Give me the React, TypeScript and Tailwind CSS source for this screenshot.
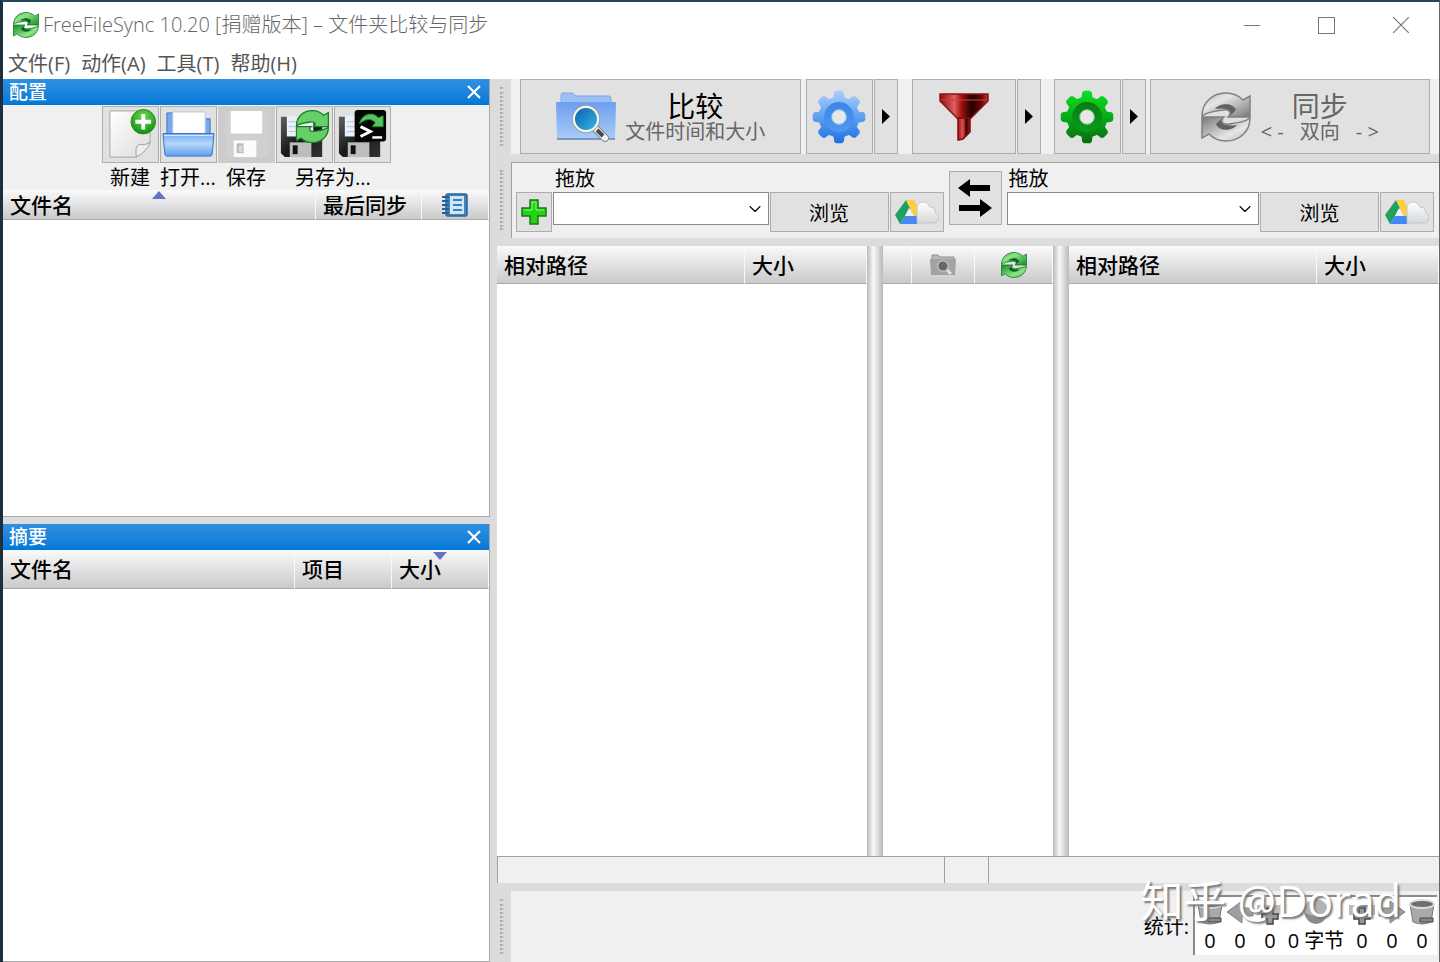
import type { ReactNode } from 'react'
import { ChevronDown } from 'lucide-react'

const btn = 'flex items-center justify-center border border-[#adadad] bg-[#e1e1e1]'
const headRow = 'bg-linear-to-b from-[#fafafa] to-[#c9c9c9]'
const headCell =
  'border-r border-b border-r-[#f8f8f8] border-b-[#a8a8a8] px-[7px] text-left text-[21px] leading-6 font-medium'

const MENUS = ['文件(F)', '动作(A)', '工具(T)', '帮助(H)']

const UPPER =
  'M1 24 C1 10 12 1 25 1 C32 1 38 4 42 8 L49 4 L49 25 L27 25 C31 21 29 17 22 18 C13 19 6 20 1 24 Z'

function SyncIcon({ className, gray }: { className: string; gray?: boolean }) {
  const id = gray ? 'sync-gray' : 'sync-green'
  return (
    <svg viewBox="0 0 50 50" className={className} aria-hidden="true">
      <defs>
        <linearGradient id={id} x1="0" y1="0" x2="1" y2="1">
          <stop offset="0" stopColor={gray ? '#b4b4b4' : '#3fae45'} />
          <stop offset="0.35" stopColor={gray ? '#e6e6e6' : '#8fe488'} />
          <stop offset="1" stopColor={gray ? '#767676' : '#148f24'} />
        </linearGradient>
      </defs>
      {[0, 180].map((angle) => (
        <g key={angle} transform={`rotate(${angle} 25 25)`}>
          <path d={UPPER} fill={`url(#${id})`} stroke={gray ? '#808080' : '#15702a'} strokeWidth="1.5" />
          <path d="M14 17 C18 11 32 10 35 18 L29 24 C32 19 27 15 14 17 Z" fill={gray ? '#626262' : '#0b6420'} />
        </g>
      ))}
    </svg>
  )
}

const GEAR = Array.from({ length: 8 }, (_, i) =>
  [[-14, 20], [-11, 22], [-9, 25], [-6, 26], [6, 26], [9, 25], [11, 22], [14, 20]].map(([deg, r]) => {
    const a = ((i * 45 + deg) * Math.PI) / 180
    return `${(30 + r * Math.sin(a)).toFixed(1)},${(30 - r * Math.cos(a)).toFixed(1)}`
  }).join(' ')
).join(' ')

function GearIcon({ green }: { green?: boolean }) {
  const id = green ? 'gear-green' : 'gear-blue'
  return (
    <svg viewBox="0 0 60 60" className="size-[58px] shrink-0" aria-hidden="true">
      <defs>
        <linearGradient id={id} x1="0" y1="0" x2="0" y2="1">
          <stop offset="0" stopColor={green ? '#0bdc20' : '#a8cdfa'} />
          <stop offset="0.5" stopColor={green ? '#08ac18' : '#5d9ff2'} />
          <stop offset="1" stopColor={green ? '#04700c' : '#2273e0'} />
        </linearGradient>
        <linearGradient id={`${id}-ring`} x1="0" y1="0" x2="0" y2="1">
          <stop offset="0" stopColor={green ? '#087a14' : '#3b86e6'} />
          <stop offset="1" stopColor={green ? '#0b9c1c' : '#4f98f2'} />
        </linearGradient>
      </defs>
      <polygon
        points={GEAR}
        fill={`url(#${id})`}
        stroke={`url(#${id})`}
        strokeWidth="2.5"
        strokeLinejoin="round"
      />
      <circle cx="30" cy="30" r="15.5" fill={`url(#${id}-ring)`} />
      <circle cx="30" cy="30" r="7.5" fill="#e8e8e8" stroke={green ? '#8bc790' : '#9cc4f5'} />
    </svg>
  )
}

function FunnelIcon() {
  return (
    <svg viewBox="0 0 50 50" className="h-[50px] w-[50px]" aria-hidden="true">
      <defs>
        <linearGradient id="funnel" x1="0" y1="0" x2="1" y2="0">
          <stop offset="0" stopColor="#8c0c0c" />
          <stop offset="0.3" stopColor="#e06060" />
          <stop offset="0.45" stopColor="#a01010" />
          <stop offset="0.65" stopColor="#260000" />
          <stop offset="0.85" stopColor="#5c0404" />
          <stop offset="1" stopColor="#d03030" />
        </linearGradient>
        <linearGradient id="funnel-stem" x1="0" y1="0" x2="1" y2="0">
          <stop offset="0" stopColor="#b01818" />
          <stop offset="0.4" stopColor="#e05050" />
          <stop offset="0.7" stopColor="#300000" />
          <stop offset="1" stopColor="#c01818" />
        </linearGradient>
      </defs>
      <path d="M1 2 H49 V9 L31 27 H19 L1 9 Z" fill="url(#funnel)" stroke="#8c1414" strokeWidth="1.5" />
      <path d="M2 8 H48" stroke="#c84040" strokeWidth="1" />
      <path d="M19 26 H31 V40 L24 47 L19 48 Z" fill="url(#funnel-stem)" stroke="#7c0c0c" strokeWidth="1.5" />
    </svg>
  )
}

function FolderSearchIcon() {
  return (
    <svg viewBox="0 0 62 52" className="h-[52px] w-[62px]" aria-hidden="true">
      <defs>
        <linearGradient id="folder" x1="0" y1="0" x2="0" y2="1">
          <stop offset="0" stopColor="#6c9fee" />
          <stop offset="1" stopColor="#a9cbf7" />
        </linearGradient>
        <linearGradient id="lens" x1="0" y1="0" x2="1" y2="1">
          <stop offset="0" stopColor="#0c62a8" />
          <stop offset="1" stopColor="#35b4e8" />
        </linearGradient>
      </defs>
      <path d="M6 12 V4 Q6 2 8 2 H17 L21 5 H54 Q56 5 56 8 V14 H6 Z" fill="#9cc0f4" stroke="#7aa6e6" />
      <path d="M1 12 Q1 11 2 11 H60 Q61 11 61 12 L60 48 H2 Z" fill="url(#folder)" />
      <path d="M2 48 H60" stroke="#5b86b4" strokeWidth="1.5" />
      <path d="M41 38 L50 47" stroke="#888" strokeWidth="8" strokeLinecap="round" />
      <path d="M41 38 L50 47" stroke="#f4f4f4" strokeWidth="6" strokeLinecap="round" />
      <path d="M42 39 L48 45" stroke="#4a4a4a" strokeWidth="4" />
      <circle cx="31" cy="28" r="14" fill="#999" />
      <circle cx="31" cy="28" r="13.2" fill="#f6f6f6" />
      <circle cx="31" cy="28" r="11" fill="url(#lens)" />
    </svg>
  )
}

function Floppy() {
  return (
    <>
      <defs>
        <linearGradient id="disk" x1="0" y1="0" x2="1" y2="1">
          <stop offset="0" stopColor="#606060" />
          <stop offset="0.5" stopColor="#181818" />
          <stop offset="1" stopColor="#333" />
        </linearGradient>
      </defs>
      <path d="M4 10 H46 V51 H8 L4 47 Z" fill="url(#disk)" />
      <path d="M10 9 H37 V30 H10 Z" fill="#e8f1fa" />
      <path d="M12 15 H35 M12 20 H35 M12 25 H35" stroke="#b5c5d8" />
      <path d="M13 36 H35 V51 H13 Z" fill="#bdbdbd" />
      <path d="M16 39 H21 V48 H16 Z" fill="#111" />
    </>
  )
}

function NewIcon() {
  return (
    <svg viewBox="0 0 56 56" className="size-[55px]" aria-hidden="true">
      <defs>
        <linearGradient id="page" x1="0" y1="0" x2="1" y2="1">
          <stop offset="0" stopColor="#ffffff" />
          <stop offset="1" stopColor="#dcdcdc" />
        </linearGradient>
        <radialGradient id="badge" cx="0.5" cy="0.3" r="0.7">
          <stop offset="0" stopColor="#69d94c" />
          <stop offset="1" stopColor="#129012" />
        </radialGradient>
      </defs>
      <path d="M7 4 H48 V36 L34 51 H7 Z" fill="url(#page)" stroke="#a6a6a6" />
      <path d="M34 51 Q32 40 37 38 Q42 40 48 36 Q45 45 34 51 Z" fill="#eee" stroke="#a0a0a0" />
      <circle cx="41" cy="15" r="12.5" fill="url(#badge)" stroke="#2e8a22" />
      <path d="M41 7 V23 M33 15 H49" stroke="#fff" strokeWidth="4" />
    </svg>
  )
}

function OpenIcon() {
  return (
    <svg viewBox="0 0 56 56" className="size-[55px]" aria-hidden="true">
      <defs>
        <linearGradient id="tray" x1="0" y1="0" x2="0" y2="1">
          <stop offset="0" stopColor="#75abf0" />
          <stop offset="0.45" stopColor="#b4d8fc" />
          <stop offset="1" stopColor="#5f9ded" />
        </linearGradient>
      </defs>
      <path d="M6 28 V6 H14 V12 H50 V28 Z" fill="#79a9ea" stroke="#3b78c8" />
      <path d="M12 5 H45 V27 H12 Z" fill="#fff" stroke="#b8cce4" />
      <path d="M2 27 H54 L52 48 Q52 50 50 50 H6 Q4 50 4 48 Z" fill="url(#tray)" stroke="#3974c4" />
      <path d="M3 29 H53" stroke="#d6e9ff" />
    </svg>
  )
}

function SaveIcon() {
  return (
    <svg viewBox="0 0 56 56" className="size-[55px]" aria-hidden="true">
      <path d="M6 5 H50 V51 H10 L6 47 Z" fill="#d0d0d0" />
      <path d="M12 4 H44 V27 H12 Z" fill="#fff" />
      <path d="M15 34 H38 V51 H15 Z" fill="#fbfbfb" />
      <path d="M18 37 H25 V47 H18 Z" fill="#b8b8b8" />
      <path d="M20 39 H24 V46 H20 Z" fill="#d8d8d8" />
    </svg>
  )
}

function SaveSyncIcon() {
  return (
    <svg viewBox="0 0 56 56" className="size-[55px]" aria-hidden="true">
      <Floppy />
      <svg x="19" y="3" width="34" height="34" viewBox="0 0 50 50">
        {[0, 180].map((angle) => (
          <path key={angle} d={UPPER} transform={`rotate(${angle} 25 25)`} fill="#68cf66" stroke="#168028" strokeWidth="2" />
        ))}
      </svg>
    </svg>
  )
}

function SaveBatchIcon() {
  return (
    <svg viewBox="0 0 56 56" className="size-[55px]" aria-hidden="true">
      <Floppy />
      <rect x="20" y="3" width="32" height="32" rx="3" fill="#050505" />
      <path d="M25 17 C27 7 39 4 44 11 L49 9 V20 H38 L41 16 C37 11 31 12 25 17 Z" fill="#55c45c" stroke="#23883a" />
      <path d="M26 20 L36 25 L26 30" fill="none" stroke="#fff" strokeWidth="3" />
      <path d="M38 31 H48" stroke="#fff" strokeWidth="2.5" />
    </svg>
  )
}

function CloudIcon() {
  return (
    <svg viewBox="0 0 46 28" className="h-7 w-[46px]" aria-hidden="true">
      <defs>
        <linearGradient id="cloud" x1="0" y1="0" x2="0" y2="1">
          <stop offset="0" stopColor="#ffffff" />
          <stop offset="1" stopColor="#d5dadd" />
        </linearGradient>
      </defs>
      <path d="M12 2 L16 10 L6 26 L1 17 Z" fill="#1fa15d" />
      <path d="M12 2 H20 L23 8 V19 L20 18 Z" fill="#ffcd42" />
      <path d="M11 18 H23 V26 H6 Z" fill="#4688f4" />
      <path d="M15 10 L19 18 H11 Z" fill="#f2f2f2" />
      <path
        d="M23 25 V8 C25 3 33 2 36 9 C41 9 42 13 41 14 C46 16 46 25 39 25 Z"
        fill="url(#cloud)"
        stroke="#b9bec2"
        strokeWidth="0.8"
      />
    </svg>
  )
}

function NotebookIcon() {
  return (
    <svg viewBox="0 0 28 26" className="h-[26px] w-7" aria-hidden="true">
      <rect x="5" y="2" width="21" height="22" rx="2" fill="#4583bb" stroke="#2a659d" strokeWidth="1.5" />
      <rect x="9" y="4" width="14" height="18" fill="#cfe6f8" />
      <path d="M12 8 H21 M12 13 H21 M12 18 H21" stroke="#3d7fb8" strokeWidth="2" />
      <path d="M1 5 H8 M1 9 H8 M1 13 H8 M1 17 H8 M1 21 H8" stroke="#2a5f93" strokeWidth="2" />
    </svg>
  )
}

function GrayFolderIcon() {
  return (
    <svg viewBox="0 0 28 24" className="h-6 w-7" aria-hidden="true">
      <path d="M3 5 V2 H9 L11 4 H25 V7 H3 Z" fill="#b8b8b8" stroke="#8e8e8e" />
      <path d="M1 6 H27 L26 22 H2 Z" fill="#a3a3a3" />
      <path d="M17 16 L22 21" stroke="#e0e0e0" strokeWidth="3" />
      <circle cx="14" cy="13" r="6" fill="#c0c0c0" />
      <circle cx="14" cy="13" r="4.5" fill="#666" />
    </svg>
  )
}

function SwapIcon() {
  return (
    <svg viewBox="0 0 34 38" className="h-[38px] w-[34px]" aria-hidden="true">
      <path d="M0 9 L12 0 V6 H32 V12 H12 V18 Z" />
      <path d="M34 29 L22 20 V26 H1 V32 H22 V38 Z" />
    </svg>
  )
}

function PlusIcon() {
  return (
    <svg viewBox="0 0 26 26" className="size-[26px]" aria-hidden="true">
      <path d="M9 1 H17 V9 H25 V17 H17 V25 H9 V17 H1 V9 H9 Z" fill="#23d413" stroke="#1d7a14" strokeWidth="1.5" />
      <path d="M11 3 H15 V11 H23 M3 11 H11 V3" fill="none" stroke="#8cf57c" strokeWidth="1" />
    </svg>
  )
}

function CloseIcon() {
  return (
    <svg viewBox="0 0 14 14" className="size-[14px]" aria-hidden="true">
      <path d="M1 1 L13 13 M13 1 L1 13" stroke="currentColor" strokeWidth="2.2" />
    </svg>
  )
}

function TriangleRight() {
  return (
    <svg viewBox="0 0 8 15" className="h-[15px] w-2" aria-hidden="true">
      <path d="M0 0 L8 7.5 L0 15 Z" />
    </svg>
  )
}

function StatIcon({ kind }: { kind: string }) {
  return (
    <svg viewBox="0 0 28 28" className="size-7" aria-hidden="true">
      {kind === 'bin' && (
        <>
          <path d="M2 6 L5 24 Q14 28 23 24 L26 6 Z" fill="#a9a9a9" stroke="#777" />
          <ellipse cx="14" cy="6" rx="12" ry="4" fill="#6e6e6e" stroke="#ddd" strokeWidth="2" />
          <path d="M12 20 H25 V24 H12 Z" fill="#888" stroke="#444" />
        </>
      )}
      {(kind === 'left' || kind === 'right') && (
        <path
          d="M1 14 L16 3 V10 H27 V18 H16 V25 Z"
          transform={kind === 'right' ? 'rotate(180 14 14)' : undefined}
          fill="#9f9f9f"
          stroke="#828282"
        />
      )}
      {kind === 'plus' && (
        <>
          <path d="M1 7 H27 V17 H1 Z" fill="#bbb" />
          <path d="M11 10 H17 V16 H22 V21 H17 V26 H11 V21 H6 V16 H11 Z" fill="#999" stroke="#444" strokeWidth="1.5" />
        </>
      )}
      {kind === 'data' && (
        <>
          <circle cx="14" cy="13" r="12" fill="#b4b4b4" />
          <path d="M2 14 Q14 22 26 14 Q23 26 14 26 Q5 26 2 14 Z" fill="#8b8b8b" />
        </>
      )}
    </svg>
  )
}

const STATS = [
  { label: '删除左侧', kind: 'bin', value: '0' },
  { label: '更新左侧', kind: 'left', value: '0' },
  { label: '新建左侧', kind: 'plus', value: '0' },
  { label: '数据', kind: 'data', value: '0 字节' },
  { label: '新建右侧', kind: 'plus', value: '0' },
  { label: '更新右侧', kind: 'right', value: '0' },
  { label: '删除右侧', kind: 'bin', value: '0' },
]

function Grip() {
  return (
    <div className="flex w-[14px] shrink-0 justify-center py-2 pr-1">
      <div className="w-1 border-x-2 border-dotted border-l-[#aaa] border-r-[#c8c8c8]" />
    </div>
  )
}

function PanelTitle({ children }: { children: ReactNode }) {
  return (
    <div className="flex h-[26px] shrink-0 items-center justify-between bg-linear-to-b from-[#2f90e0] to-[#0078d7] pr-2 pl-[6px] text-white">
      <h2 className="text-[19px] leading-6 font-medium">{children}</h2>
      <button type="button" aria-label="关闭">
        <CloseIcon />
      </button>
    </div>
  )
}

function FolderPicker({ id, withAdd }: { id: string; withAdd?: boolean }) {
  return (
    <div className="min-w-0 flex-1">
      <label htmlFor={id} className={withAdd ? 'block h-[29px] pl-[39px] leading-8' : 'block h-[29px] pl-[2px] leading-8'}>
        拖放
      </label>
      <div className="flex items-start gap-px">
        {withAdd && (
          <button type="button" aria-label="添加" className={`${btn} h-10 w-9 shrink-0`}>
            <PlusIcon />
          </button>
        )}
        <div className="relative min-w-0 flex-1">
          <select id={id} className="block h-[33px] w-full appearance-none border border-[#8a8a8a] bg-white px-2">
            <option value=""></option>
          </select>
          <ChevronDown className="pointer-events-none absolute top-[7px] right-1 size-5" strokeWidth={1.3} />
        </div>
        <button type="button" className={`${btn} h-10 w-[119px] shrink-0 pt-[3px]`}>
          浏览
        </button>
        <button type="button" aria-label="云存储" className={`${btn} h-10 w-[54px] shrink-0`}>
          <CloudIcon />
        </button>
      </div>
    </div>
  )
}

function PathTable() {
  return (
    <div className="min-w-0 flex-1 bg-white">
      <table className="w-full table-fixed border-separate border-spacing-0">
        <thead>
          <tr className={headRow}>
            <th className={`${headCell} h-[38px] w-[248px]`}>相对路径</th>
            <th className={headCell}>大小</th>
          </tr>
        </thead>
      </table>
    </div>
  )
}

function Splitter() {
  return <div className="w-4 shrink-0 bg-linear-to-r from-[#bababa] via-[#f8f8f8] via-40% to-[#bababa]" />
}

export default function App() {
  return (
    <div className="flex min-h-screen flex-col border-t-2 border-r border-l-[3px] border-t-[#24465a] border-r-[#666] border-l-[#1d2f3d] bg-[#dcdcdc] font-['Open_Sans','Noto_Sans_CJK_SC',sans-serif] text-[20px] font-normal text-black">
      <header className="h-[77px] shrink-0 bg-white">
        <div className="flex h-[46px] items-center justify-between">
          <div className="flex items-center gap-1 pl-[10px]">
            <SyncIcon className="size-[26px]" />
            <h1 className="leading-7 font-light text-[#666]">FreeFileSync 10.20 [捐赠版本] – 文件夹比较与同步</h1>
          </div>
          <div className="flex items-center gap-[58px] pr-[30px] text-[#777]">
            <button type="button" aria-label="最小化" className="h-4 w-4">
              <svg viewBox="0 0 16 16"><path d="M0 8.5 H16" stroke="currentColor" /></svg>
            </button>
            <button type="button" aria-label="最大化" className="size-[17px] border border-[#777]" />
            <button type="button" aria-label="关闭窗口" className="size-4">
              <svg viewBox="0 0 16 16"><path d="M0 0 L16 16 M16 0 L0 16" stroke="currentColor" strokeWidth="1.2" /></svg>
            </button>
          </div>
        </div>
        <nav className="flex gap-[11px] pl-[5px] text-[#555]">
          {MENUS.map((menu) => (
            <button key={menu} type="button" className="leading-8">
              {menu}
            </button>
          ))}
        </nav>
      </header>

      <div className="flex flex-1 gap-[7px]">
        <aside className="flex w-[487px] shrink-0 flex-col gap-[7px]">
          <section className="flex flex-1 flex-col border-r border-b border-[#aaa] bg-white">
            <PanelTitle>配置</PanelTitle>
            <div className="flex justify-center bg-[#f0f0f0] pt-px">
              <div className="grid grid-cols-[repeat(5,57px)] gap-x-px text-center">
                <button type="button" aria-labelledby="cfg-new" className={`${btn} h-[57px]`}><NewIcon /></button>
                <button type="button" aria-labelledby="cfg-open" className={`${btn} h-[57px]`}><OpenIcon /></button>
                <button type="button" aria-labelledby="cfg-save" disabled className="flex h-[57px] items-center justify-center bg-[#cccccc]"><SaveIcon /></button>
                <button type="button" aria-label="另存为同步配置" className={`${btn} h-[57px]`}><SaveSyncIcon /></button>
                <button type="button" aria-label="另存为批处理作业" className={`${btn} h-[57px]`}><SaveBatchIcon /></button>
                <span id="cfg-new" className="h-[27px] leading-[30px]">新建</span>
                <span id="cfg-open" className="h-[27px] leading-[30px]">打开...</span>
                <span id="cfg-save" className="h-[27px] leading-[30px]">保存</span>
                <span className="col-span-2 h-[27px] leading-[30px]">另存为...</span>
              </div>
            </div>
            <table className="w-full table-fixed border-separate border-spacing-0">
              <thead>
                <tr className={headRow}>
                  <th className={`${headCell} relative h-[30px]`}>
                    文件名
                    <svg viewBox="0 0 14 8" className="absolute top-px left-[149px] h-2 w-[14px]" aria-hidden="true">
                      <path d="M0 8 L7 0 L14 8 Z" fill="#6670c4" />
                    </svg>
                  </th>
                  <th className={`${headCell} w-[106px]`}>最后同步</th>
                  <th className={`${headCell} w-[67px]`} aria-label="日志">
                    <span className="flex justify-center"><NotebookIcon /></span>
                  </th>
                </tr>
              </thead>
            </table>
          </section>

          <section className="flex flex-1 flex-col border-r border-b border-[#aaa] bg-white">
            <PanelTitle>摘要</PanelTitle>
            <table className="w-full table-fixed border-separate border-spacing-0">
              <thead>
                <tr className={headRow}>
                  <th className={`${headCell} h-[39px]`}>文件名</th>
                  <th className={`${headCell} w-[97px]`}>项目</th>
                  <th className={`${headCell} relative w-[97px]`}>
                    大小
                    <svg viewBox="0 0 14 8" className="absolute top-[2px] left-[41px] h-2 w-[14px]" aria-hidden="true">
                      <path d="M0 0 L7 8 L14 0 Z" fill="#6670c4" />
                    </svg>
                  </th>
                </tr>
              </thead>
            </table>
          </section>
        </aside>

        <main className="flex min-w-0 flex-1 flex-col gap-2">
          <div className="flex">
            <Grip />
            <div className="flex flex-1 bg-[#f0f0f0] pr-[9px] pl-[9px]">
              <button type="button" className={`${btn} h-[75px] flex-1 gap-2`}>
                <FolderSearchIcon />
                <span>
                  <span className="mb-[2px] block text-[28px] leading-7">比较</span>
                  <span className="block leading-5 text-[#666]">文件时间和大小</span>
                </span>
              </button>
              <button type="button" aria-label="比较设置" className={`${btn} ml-[5px] w-[67px]`}><GearIcon /></button>
              <button type="button" aria-label="比较选项" className={`${btn} ml-px w-6`}><TriangleRight /></button>
              <button type="button" aria-label="筛选器" className={`${btn} ml-[14px] w-[104px]`}><FunnelIcon /></button>
              <button type="button" aria-label="筛选选项" className={`${btn} ml-px w-6`}><TriangleRight /></button>
              <button type="button" aria-label="同步设置" className={`${btn} ml-[13px] w-[67px]`}><GearIcon green /></button>
              <button type="button" aria-label="同步选项" className={`${btn} ml-px w-6`}><TriangleRight /></button>
              <button type="button" className={`${btn} ml-1 h-[75px] flex-1 gap-[10px] text-[#666]`}>
                <SyncIcon gray className="size-[50px]" />
                <span>
                  <span className="mb-[2px] block text-[28px] leading-7">同步</span>
                  <span className="flex gap-4 leading-5">
                    <span>&lt; -</span>
                    <span>双向</span>
                    <span>- &gt;</span>
                  </span>
                </span>
              </button>
            </div>
          </div>

          <div className="flex">
            <Grip />
            <div className="flex h-[76px] flex-1 gap-[5px] border-t border-l border-[#a0a0a0] bg-[#f0f0f0] pr-[5px] pl-1">
              <FolderPicker id="left-folder" withAdd />
              <button type="button" aria-label="交换两侧" className={`${btn} mt-2 h-[54px] w-[53px] shrink-0`}>
                <SwapIcon />
              </button>
              <FolderPicker id="right-folder" />
            </div>
          </div>

          <div className="flex flex-1 flex-col">
            <div className="flex flex-1">
              <PathTable />
              <Splitter />
              <div className="w-[170px] shrink-0 bg-white">
                <table className="w-full table-fixed border-separate border-spacing-0">
                  <thead>
                    <tr className={headRow}>
                      <th className={`${headCell} h-[38px] w-[29px]`} aria-label="选择" />
                      <th className={`${headCell} w-[63px]`} aria-label="类别">
                        <span className="flex justify-center"><GrayFolderIcon /></span>
                      </th>
                      <th className={headCell} aria-label="操作">
                        <span className="flex justify-center"><SyncIcon className="size-[26px]" /></span>
                      </th>
                    </tr>
                  </thead>
                </table>
              </div>
              <Splitter />
              <PathTable />
            </div>
            <div className="flex h-[27px] border-t border-l border-[#a0a0a0] bg-[#f0f0f0] pr-1">
              <div className="flex-1" />
              <div className="w-[45px] border-x border-[#a0a0a0]" />
              <div className="flex-1" />
            </div>
          </div>

          <footer className="relative flex h-[71px]">
            <Grip />
            <div className="flex flex-1 items-start justify-end gap-1 bg-[#f0f0f0] pt-1 pr-[2px]">
              <span className="pt-[18px] leading-7">统计:</span>
              <dl className="flex border-t-2 border-l-2 border-[#8a8a8a] bg-white">
                {STATS.map((stat) => (
                  <div key={stat.label} className={stat.kind === 'data' ? 'w-[62px] text-center' : 'w-[30px] text-center'}>
                    <dt aria-label={stat.label} className="flex h-[30px] items-center justify-center">
                      <StatIcon kind={stat.kind} />
                    </dt>
                    <dd className="leading-7 whitespace-nowrap">{stat.value}</dd>
                  </div>
                ))}
              </dl>
            </div>
            <span className="pointer-events-none absolute -top-[14px] right-[38px] text-[43px] leading-[48px] font-normal whitespace-nowrap text-white [text-shadow:2px_2px_2px_#777]">
              知乎 @Dorad
            </span>
          </footer>
        </main>
      </div>
    </div>
  )
}
